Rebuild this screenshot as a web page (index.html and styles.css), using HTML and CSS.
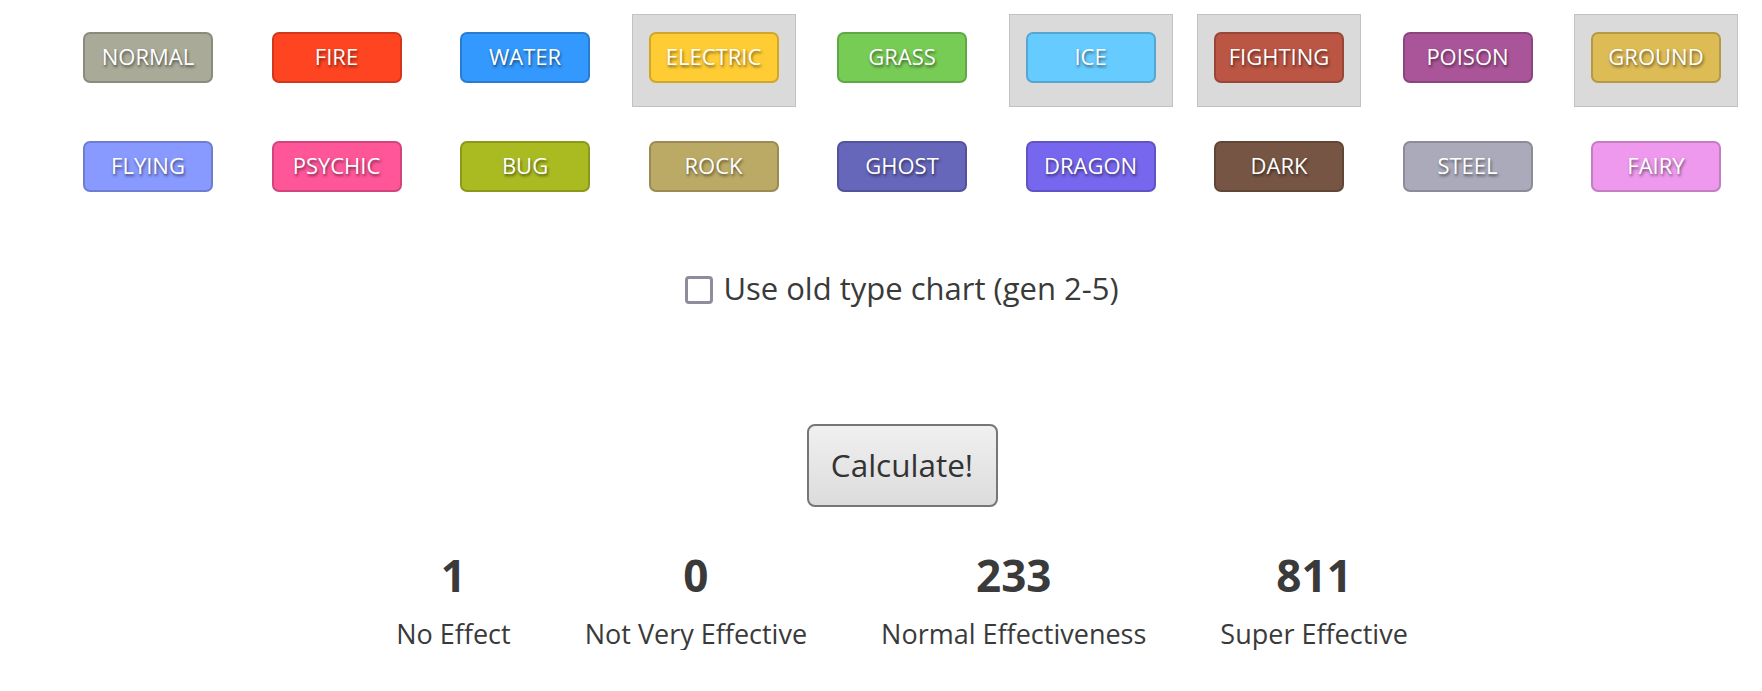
FILE: index.html
```html
<!DOCTYPE html>
<html lang="en">
<head>
<meta charset="utf-8">
<title>Type Coverage Calculator</title>
<link rel="stylesheet" href="styles.css">
</head>
<body>
<main class="page">
  <div class="types">
    <div class="cell"><button class="type normal">NORMAL</button></div>
    <div class="cell"><button class="type fire">FIRE</button></div>
    <div class="cell"><button class="type water">WATER</button></div>
    <div class="cell selected"><button class="type electric">ELECTRIC</button></div>
    <div class="cell"><button class="type grass">GRASS</button></div>
    <div class="cell selected"><button class="type ice">ICE</button></div>
    <div class="cell selected"><button class="type fighting">FIGHTING</button></div>
    <div class="cell"><button class="type poison">POISON</button></div>
    <div class="cell selected"><button class="type ground">GROUND</button></div>
    <div class="cell"><button class="type flying">FLYING</button></div>
    <div class="cell"><button class="type psychic">PSYCHIC</button></div>
    <div class="cell"><button class="type bug">BUG</button></div>
    <div class="cell"><button class="type rock">ROCK</button></div>
    <div class="cell"><button class="type ghost">GHOST</button></div>
    <div class="cell"><button class="type dragon">DRAGON</button></div>
    <div class="cell"><button class="type dark">DARK</button></div>
    <div class="cell"><button class="type steel">STEEL</button></div>
    <div class="cell"><button class="type fairy">FAIRY</button></div>
  </div>

  <label class="option">
    <input type="checkbox" class="check">
    <span>Use old type chart (gen 2-5)</span>
  </label>

  <div class="actions">
    <button class="calc">Calculate!</button>
  </div>

  <div class="results">
    <div class="result">
      <div class="num">1</div>
      <div class="label">No Effect</div>
    </div>
    <div class="result">
      <div class="num">0</div>
      <div class="label">Not Very Effective</div>
    </div>
    <div class="result">
      <div class="num">233</div>
      <div class="label">Normal Effectiveness</div>
    </div>
    <div class="result">
      <div class="num">811</div>
      <div class="label">Super Effective</div>
    </div>
  </div>
</main>
</body>
</html>
```
FILE: styles.css
```css
html, body {
  margin: 0;
  padding: 0;
  background: #ffffff;
}

body {
  font-family: "Open Sans", "Noto Sans", sans-serif;
  color: #3a3a3a;
}

.page {
  margin-left: 42px;
  width: 1720px;
  display: flex;
  flex-direction: column;
  align-items: center;
}

.types {
  margin-top: 14px;
  display: grid;
  grid-template-columns: repeat(9, 164px);
  column-gap: 24.5px;
  row-gap: 16px;
}

.cell {
  box-sizing: border-box;
  height: 93px;
  padding: 17px 16px 24px;
  border: 1px solid transparent;
  display: flex;
  justify-content: center;
  align-items: flex-start;
}

.cell.selected {
  background: #dadada;
  border-color: #c2c2c2;
}

.type {
  box-sizing: border-box;
  width: 131px;
  height: 51px;
  border: 2px solid rgba(0, 0, 0, 0.18);
  border-radius: 7px;
  font-family: "Open Sans", "Noto Sans", sans-serif;
  font-size: 22px;
  color: #ffffff;
  text-shadow: 1px 2px 3px rgba(0, 0, 0, 0.55);
  padding: 0 0 3px 0;
  cursor: pointer;
}

.normal { background-color: #aaaa99; }
.fire { background-color: #ff4422; }
.water { background-color: #3399ff; }
.electric { background-color: #ffcc33; }
.grass { background-color: #77cc55; }
.ice { background-color: #66ccff; }
.fighting { background-color: #bb5544; }
.poison { background-color: #aa5599; }
.ground { background-color: #ddbb55; }
.flying { background-color: #8899ff; }
.psychic { background-color: #ff5599; }
.bug { background-color: #aabb22; }
.rock { background-color: #bbaa66; }
.ghost { background-color: #6666bb; }
.dragon { background-color: #7766ee; }
.dark { background-color: #775544; }
.steel { background-color: #aaaabb; }
.fairy { background-color: #ee99ee; }

.option {
  margin-top: 52px;
  display: flex;
  align-items: center;
  gap: 10px;
  font-size: 31px;
  line-height: 40px;
  color: #3a3a3a;
}

.check {
  appearance: none;
  -webkit-appearance: none;
  box-sizing: border-box;
  width: 28px;
  height: 28px;
  margin: 4px 0 0 0;
  border: 3px solid #8f8c9b;
  border-radius: 4px;
  background: #ffffff;
}

.actions {
  margin-top: 116px;
}

.calc {
  box-sizing: border-box;
  width: 191px;
  height: 83px;
  border: 2px solid #767676;
  border-radius: 8px;
  background: linear-gradient(#f0f0f0, #dcdcdc);
  font-family: "Open Sans", "Noto Sans", sans-serif;
  font-size: 31.5px;
  color: #333333;
  padding: 0 0 2px 0;
}

.results {
  margin-top: 42px;
  display: flex;
  gap: 74px;
}

.result {
  display: flex;
  flex-direction: column;
  align-items: center;
}

.num {
  font-size: 44px;
  font-weight: 700;
  line-height: 53px;
  color: #3a3a3a;
}

.label {
  margin-top: 16px;
  font-size: 27px;
  line-height: 32px;
  color: #3a3a3a;
}
```
